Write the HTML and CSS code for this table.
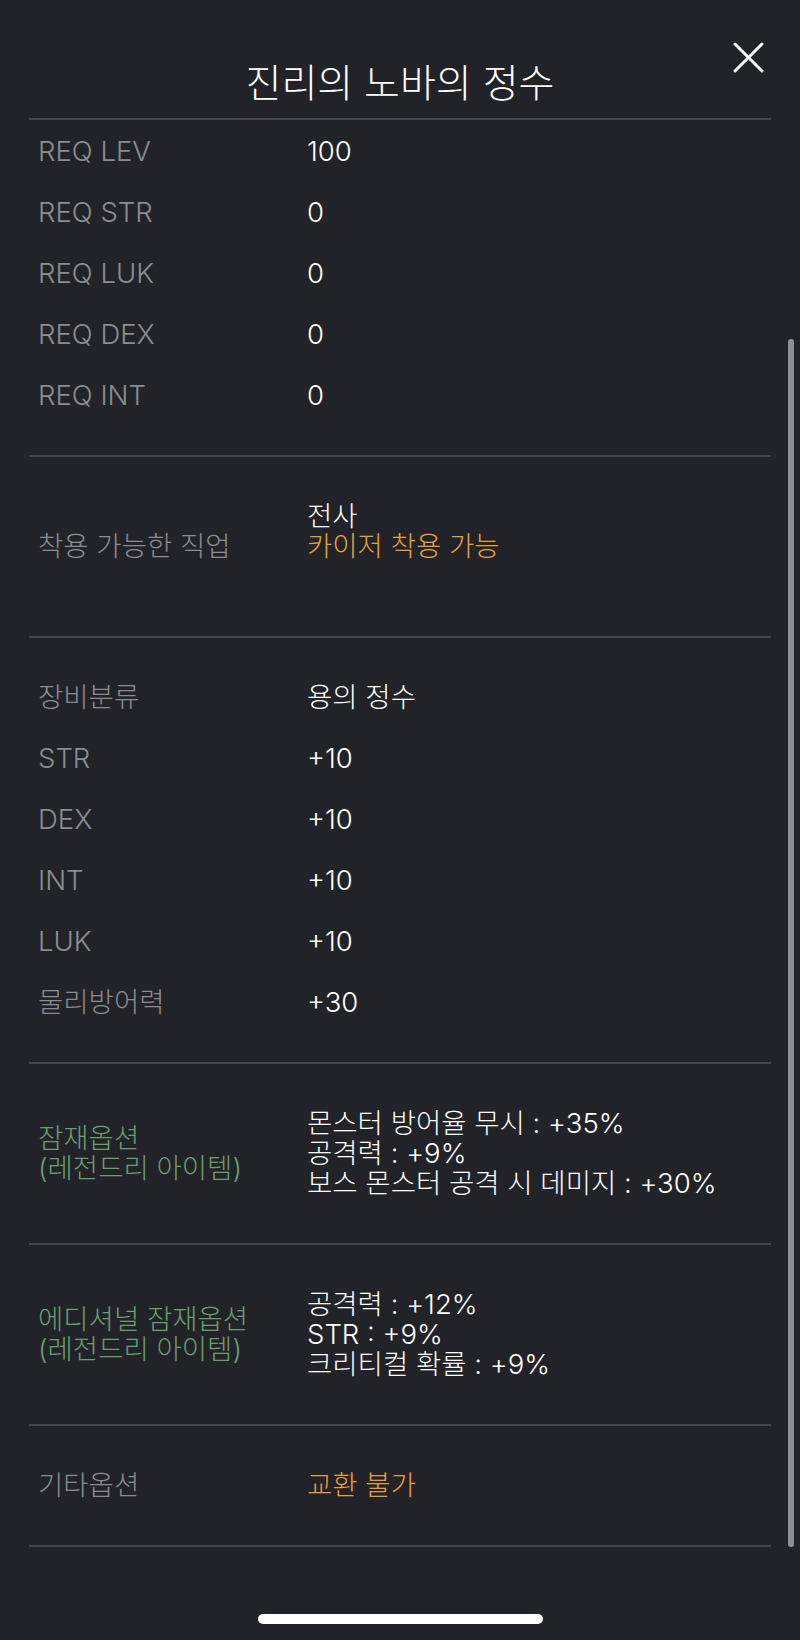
FILE: index.html
```html
<!DOCTYPE html>
<html lang="ko">
<head>
<meta charset="utf-8">
<title>진리의 노바의 정수</title>
<link rel="stylesheet" href="styles.css">
</head>
<body>
<div class="screen">
  <header class="header">
    <h1 class="title">진리의 노바의 정수</h1>
    <button class="close" aria-label="닫기">
      <svg width="31" height="31" viewBox="0 0 31 31"><path d="M2 2 L29 29 M29 2 L2 29" stroke="#fff" stroke-width="3" stroke-linecap="round" fill="none"/></svg>
    </button>
  </header>

  <main class="list">
    <section class="group first">
      <div class="row"><span class="label">REQ LEV</span><span class="value">100</span></div>
      <div class="row"><span class="label">REQ STR</span><span class="value">0</span></div>
      <div class="row"><span class="label">REQ LUK</span><span class="value">0</span></div>
      <div class="row"><span class="label">REQ DEX</span><span class="value">0</span></div>
      <div class="row"><span class="label">REQ INT</span><span class="value">0</span></div>
    </section>

    <section class="group">
      <div class="row multi">
        <span class="label">착용 가능한 직업</span>
        <div class="value block">
          <div>전사</div>
          <div class="orange">카이저 착용 가능</div>
        </div>
      </div>
    </section>

    <section class="group">
      <div class="row"><span class="label">장비분류</span><span class="value">용의 정수</span></div>
      <div class="row"><span class="label">STR</span><span class="value">+10</span></div>
      <div class="row"><span class="label">DEX</span><span class="value">+10</span></div>
      <div class="row"><span class="label">INT</span><span class="value">+10</span></div>
      <div class="row"><span class="label">LUK</span><span class="value">+10</span></div>
      <div class="row"><span class="label">물리방어력</span><span class="value">+30</span></div>
    </section>

    <section class="group">
      <div class="row multi">
        <div class="label green">잠재옵션<br>(레전드리 아이템)</div>
        <div class="value block">
          <div>몬스터 방어율 무시 : +35%</div>
          <div>공격력 : +9%</div>
          <div>보스 몬스터 공격 시 데미지 : +30%</div>
        </div>
      </div>
    </section>

    <section class="group">
      <div class="row multi">
        <div class="label green">에디셔널 잠재옵션<br>(레전드리 아이템)</div>
        <div class="value block">
          <div>공격력 : +12%</div>
          <div>STR : +9%</div>
          <div>크리티컬 확률 : +9%</div>
        </div>
      </div>
    </section>

    <section class="group">
      <div class="row"><span class="label">기타옵션</span><span class="value orange">교환 불가</span></div>
    </section>
  </main>

  <div class="scrollbar"></div>
  <div class="home-indicator"></div>
</div>
</body>
</html>
```

FILE: styles.css
```css
html, body {
  margin: 0;
  padding: 0;
  background: #222328;
}

body {
  font-family: Inter, "Noto Sans CJK KR", sans-serif;
  font-weight: 300;
  color: #ffffff;
}

.screen {
  position: relative;
  width: 800px;
  height: 1640px;
  overflow: hidden;
  background: #222328;
}

.header {
  height: 118px;
  margin: 0 29px;
  border-bottom: 2px solid #44454b;
  display: grid;
  grid-template-columns: 1fr auto 1fr;
  align-items: start;
}

.title {
  grid-column: 2;
  margin: 56px 0 0;
  font-family: "Noto Sans CJK KR", sans-serif;
  font-weight: 300;
  font-size: 39px;
  line-height: 48px;
  color: #ffffff;
  white-space: nowrap;
}

.close {
  grid-column: 3;
  justify-self: end;
  margin: 42px 7px 0 0;
  padding: 0;
  width: 31px;
  height: 31px;
  border: 0;
  background: none;
  display: block;
}

.close svg {
  display: block;
}

.list {
  margin: 0 29px;
}

.group {
  padding: 28px 0 30px;
  border-bottom: 2px solid #44454b;
}

.group.first {
  padding-top: 0;
}

.row {
  display: grid;
  grid-template-columns: 269px 1fr;
  align-items: center;
  padding: 15.5px 0 15.5px 9px;
  font-size: 27.5px;
  line-height: 30px;
}

.label {
  color: #8b8c92;
  white-space: nowrap;
}

.value {
  color: #ffffff;
  white-space: nowrap;
}

.block {
  min-height: 90px;
  align-self: center;
}

.orange {
  color: #e3a13c;
}

.green {
  color: #6c9c70;
}

.scrollbar {
  position: absolute;
  left: 788px;
  top: 339px;
  width: 6px;
  height: 1208px;
  border-radius: 3px;
  background: #8e8f95;
}

.home-indicator {
  position: absolute;
  left: 258px;
  top: 1614px;
  width: 285px;
  height: 10px;
  border-radius: 5px;
  background: #ffffff;
}
```
